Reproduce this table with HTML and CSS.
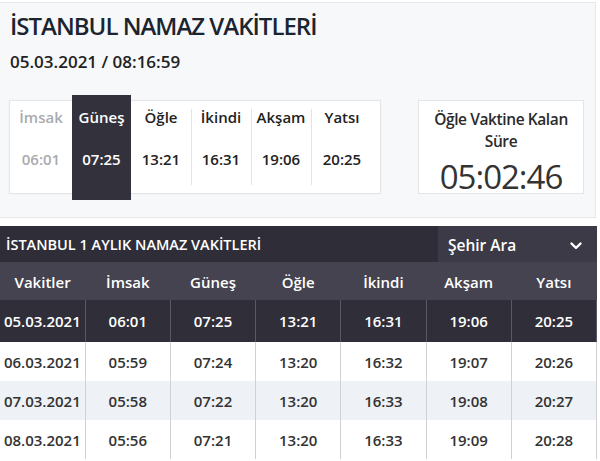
FILE: index.html
```html
<!DOCTYPE html>
<html lang="tr">
<head>
<meta charset="utf-8">
<link rel="stylesheet" href="styles.css">
</head>
<body>
<section class="top">
  <h1 class="title">İSTANBUL NAMAZ VAKİTLERİ</h1>
  <div class="date">05.03.2021 / 08:16:59</div>
  <div class="panel">
    <div class="times">
      <div class="col c1 past"><span class="name">İmsak</span><span class="val">06:01</span></div>
      <div class="col c2 active"><span class="name">Güneş</span><span class="val">07:25</span></div>
      <div class="col c3"><span class="name">Öğle</span><span class="val">13:21</span></div>
      <div class="col c4 sep"><span class="name">İkindi</span><span class="val">16:31</span></div>
      <div class="col c5 sep"><span class="name">Akşam</span><span class="val">19:06</span></div>
      <div class="col c6 sep"><span class="name">Yatsı</span><span class="val">20:25</span></div>
    </div>
    <div class="remain">
      <div class="remain-label">Öğle Vaktine Kalan<br>Süre</div>
      <div class="remain-time">05:02:46</div>
    </div>
  </div>
</section>

<section class="monthly">
  <div class="bar">
    <div class="bar-title">İSTANBUL 1 AYLIK NAMAZ VAKİTLERİ</div>
    <div class="select">
      <span>Şehir Ara</span>
      <svg class="chev" width="12" height="8" viewBox="0 0 12 8"><path d="M1.5 1.5 L6 6 L10.5 1.5" fill="none" stroke="#fff" stroke-width="2.4" stroke-linecap="round" stroke-linejoin="round"/></svg>
    </div>
  </div>
  <table class="grid">
    <thead>
      <tr><th>Vakitler</th><th>İmsak</th><th>Güneş</th><th>Öğle</th><th>İkindi</th><th>Akşam</th><th>Yatsı</th></tr>
    </thead>
    <tbody>
      <tr class="today"><td>05.03.2021</td><td>06:01</td><td>07:25</td><td>13:21</td><td>16:31</td><td>19:06</td><td>20:25</td></tr>
      <tr><td>06.03.2021</td><td>05:59</td><td>07:24</td><td>13:20</td><td>16:32</td><td>19:07</td><td>20:26</td></tr>
      <tr class="alt"><td>07.03.2021</td><td>05:58</td><td>07:22</td><td>13:20</td><td>16:33</td><td>19:08</td><td>20:27</td></tr>
      <tr><td>08.03.2021</td><td>05:56</td><td>07:21</td><td>13:20</td><td>16:33</td><td>19:09</td><td>20:28</td></tr>
    </tbody>
  </table>
</section>
</body>
</html>
```

FILE: styles.css
```css
* { box-sizing: border-box; }
html, body { margin: 0; padding: 0; }
body {
  background: #fff;
  font-family: "Open Sans", "Noto Sans", sans-serif;
  color: #333;
  width: 600px;
  height: 461px;
  overflow: hidden;
}

.top {
  margin: 2px 4px 0 0;
  height: 216px;
  background: #f7f8f9;
  border: 1px solid #e6e7e9;
  border-left: none;
  padding: 7px 0 0 9px;
}
.title {
  margin: 0 0 0 1px;
  font-size: 24px;
  line-height: 32px;
  font-weight: 600;
  color: #1b2530;
  letter-spacing: -1px;
}
.date {
  margin: 8px 0 0 1px;
  font-size: 17px;
  line-height: 24px;
  font-weight: 600;
  color: #222;
}
.panel {
  display: flex;
  gap: 37px;
  margin-top: 26px;
}
.times {
  display: flex;
  height: 94px;
  background: #fff;
  border: 1px solid #e4e5e7;
  padding-right: 7px;
  box-shadow: 0 0 2px rgba(0,0,0,0.04);
}
.col {
  display: flex;
  flex-direction: column;
  align-items: center;
  padding-top: 6px;
  font-weight: 600;
  font-size: 15px;
  color: #222;
}
.col .name { line-height: 20px; }
.col .val { line-height: 20px; margin-top: 22px; }
.c1 { width: 62px; }
.c2 { width: 59px; }
.c3, .c4, .c5 { width: 60px; }
.c6 { width: 62px; }
.sep {
  background: linear-gradient(#e2e3e5, #e2e3e5) left 8px / 1px calc(100% - 16px) no-repeat;
}
.past { color: #a9abae; }
.active {
  background: #33323c;
  color: #fff;
  margin: -6px 0 -7px;
  padding-top: 12px;
}

.remain {
  width: 166px;
  height: 94px;
  background: #fff;
  border: 1px solid #e4e5e7;
  text-align: center;
  padding-top: 7px;
}
.remain-label {
  font-size: 15.5px;
  line-height: 22px;
  font-weight: 600;
  letter-spacing: -0.4px;
  color: #2b2b2b;
}
.remain-time {
  font-size: 33px;
  line-height: 40px;
  font-weight: 400;
  letter-spacing: -1px;
  color: #333;
  margin-top: 5px;
}

.monthly {
  margin-top: 8px;
  width: 597px;
}
.bar {
  display: flex;
  height: 36px;
  background: #2f2d38;
  color: #fff;
}
.bar-title {
  flex: 1;
  padding-left: 6px;
  font-size: 14.5px;
  font-weight: 600;
  line-height: 37px;
}
.select {
  width: 159px;
  background: #3c3a47;
  display: flex;
  align-items: center;
  justify-content: space-between;
  padding: 2px 15px 0 10px;
  font-size: 15.5px;
  font-weight: 600;
}
.chev { display: block; margin-top: 1px; }

.grid {
  width: 597px;
  border-collapse: collapse;
  table-layout: fixed;
}
.grid th, .grid td {
  text-align: center;
  font-size: 15px;
  font-weight: 600;
  padding: 0;
}
.grid th {
  height: 38px;
  padding-top: 2px;
  background: #45434f;
  color: #fff;
}
.grid td {
  height: 39px;
  color: #333;
  border-left: 1px solid #cfd1d4;
}
.grid td:first-child { border-left: none; }
.grid td:last-child { border-right: 1px solid #cfd1d4; }
.grid tr.today td {
  height: 42px;
  background: #302e39;
  color: #fff;
  border-color: #5a5864;
}
.grid tr.alt td { background: #eef1f5; }
```
